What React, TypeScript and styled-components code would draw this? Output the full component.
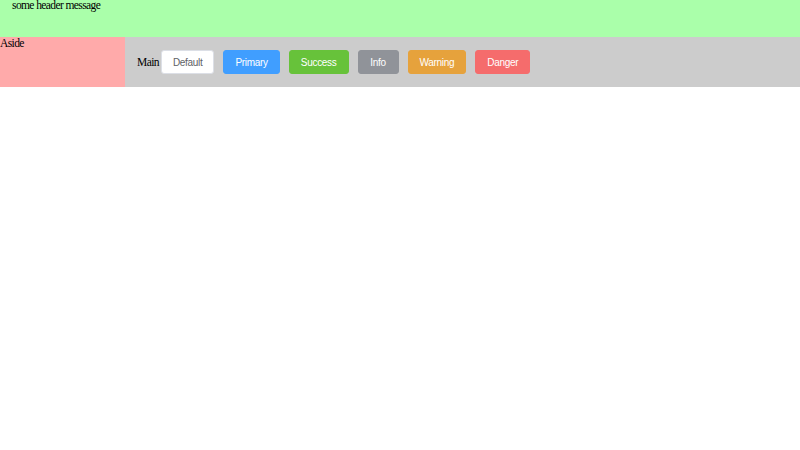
import React from "react";
import styled, { createGlobalStyle } from "styled-components";

const GlobalStyle = createGlobalStyle`
  html, body {
    margin: 0;
    padding: 0;
    background: #ffffff;
  }
  body {
    font-family: "Liberation Serif", "Times New Roman", serif;
    font-size: 11.5px;
    letter-spacing: -0.6px;
    color: #000;
  }
`;

type Kind = "default" | "primary" | "success" | "info" | "warning" | "danger";

const palette: Record<Kind, { bg: string; border: string; color: string }> = {
  default: { bg: "#ffffff", border: "#dcdfe6", color: "#606266" },
  primary: { bg: "#409eff", border: "#409eff", color: "#ffffff" },
  success: { bg: "#67c23a", border: "#67c23a", color: "#ffffff" },
  info: { bg: "#909399", border: "#909399", color: "#ffffff" },
  warning: { bg: "#e6a23c", border: "#e6a23c", color: "#ffffff" },
  danger: { bg: "#f56c6c", border: "#f56c6c", color: "#ffffff" },
};

const Header = styled.header`
  height: 37px;
  background: #aaffaa;
  padding: 0 12px;
  box-sizing: border-box;
  line-height: 11px;
`;

const Body = styled.div`
  display: flex;
`;

const Aside = styled.aside`
  width: 125px;
  background: #ffaaaa;
  line-height: 12px;
`;

const Main = styled.main`
  flex: 1;
  height: 50px;
  background: #cccccc;
  display: flex;
  align-items: center;
  padding: 0 12px;
  gap: 2px;
`;

const Buttons = styled.div`
  display: flex;
  gap: 9px;
`;

const Button = styled.button<{ $kind: Kind }>`
  height: 24px;
  min-width: 41px;
  padding: 0 11px;
  box-sizing: border-box;
  border-radius: 3px;
  border: 1px solid ${(p) => palette[p.$kind].border};
  background: ${(p) => palette[p.$kind].bg};
  color: ${(p) => palette[p.$kind].color};
  font-family: "Liberation Sans", Arial, sans-serif;
  font-size: 10px;
  letter-spacing: -0.3px;
  cursor: pointer;
`;

const buttons: { kind: Kind; label: string }[] = [
  { kind: "default", label: "Default" },
  { kind: "primary", label: "Primary" },
  { kind: "success", label: "Success" },
  { kind: "info", label: "Info" },
  { kind: "warning", label: "Warning" },
  { kind: "danger", label: "Danger" },
];

export default function App() {
  return (
    <>
      <GlobalStyle />
      <Header>some header message</Header>
      <Body>
        <Aside>Aside</Aside>
        <Main>
          <span>Main</span>
          <Buttons>
            {buttons.map((b) => (
              <Button key={b.kind} $kind={b.kind}>
                {b.label}
              </Button>
            ))}
          </Buttons>
        </Main>
      </Body>
    </>
  );
}
